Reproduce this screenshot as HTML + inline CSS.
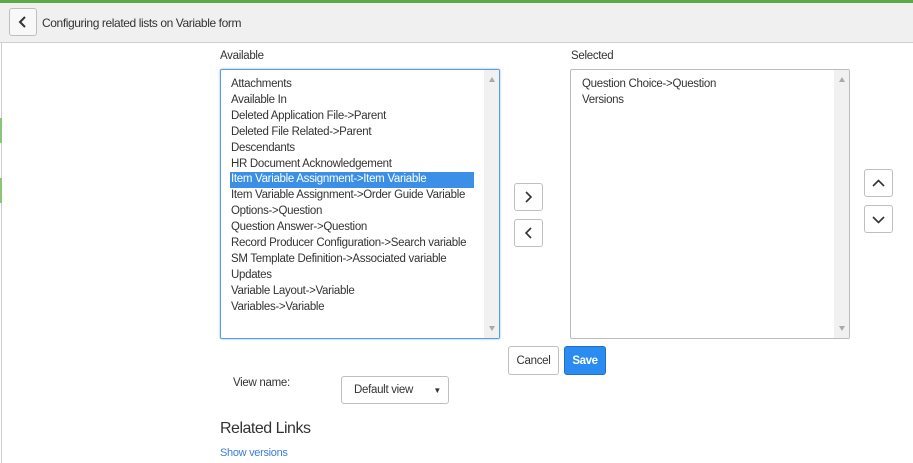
<!DOCTYPE html>
<html><head><style>
body{margin:0;width:913px;height:463px;background:#fff;font-family:"Liberation Sans",sans-serif;color:#333;position:relative;overflow:hidden}
.a{position:absolute}
.topbar{left:0;top:0;width:913px;height:3px;background:#5fa84a}
.hdr{left:0;top:3px;width:913px;height:39px;background:#f0f0f0;border-bottom:1px solid #d0d0d0}
.btn{position:absolute;border:1px solid #bfbfbf;border-radius:3px;background:#fff;box-sizing:border-box}
.lab{font-size:11.5px;color:#333;letter-spacing:-0.3px}
.box{border:1px solid #bbb;border-radius:2px;box-sizing:border-box;background:#fff}
.box .sb{position:absolute;right:0;top:0;width:15px;height:100%;background:#f1f1f1}
.items{position:absolute;left:9px;top:6px;font-size:11.5px;line-height:15.9px;letter-spacing:-0.3px}
.items div{padding-left:1px;white-space:nowrap}
.sel{background:#3b8fe6;color:#fff;width:243px}
.arr{position:absolute;right:4px;width:0;height:0;border-left:3.5px solid transparent;border-right:3.5px solid transparent}
</style></head><body>
<div class="a topbar"></div>
<div class="a hdr"></div>
<div class="btn" style="left:9px;top:8px;width:28px;height:28px;background:#f8f8f8"><svg width="26" height="26" style="position:absolute;left:0;top:0"><path d="M15 8 L10 13 L15 18" stroke="#333" stroke-width="2" fill="none"/></svg></div>
<div class="a" style="left:42px;top:16px;font-size:12px;color:#333;letter-spacing:-0.4px">Configuring related lists on Variable form</div>
<div class="a" style="left:1px;top:43px;width:1px;height:420px;background:#ccc"></div>
<div class="a" style="left:0;top:118px;width:2px;height:25px;background:#8cc47a"></div>
<div class="a" style="left:0;top:178px;width:2px;height:25px;background:#8cc47a"></div>

<div class="a lab" style="left:220px;top:50px">Available</div>
<div class="a box" style="left:220px;top:69px;width:280px;height:270px;border-color:#5b9be0;box-shadow:0 0 2px #8ab8ee">
<div class="sb"></div>
<div class="arr" style="top:7px;border-bottom:5px solid #aaa"></div>
<div class="arr" style="bottom:7px;border-top:5px solid #aaa"></div>
<div class="items" style="top:7px">
<div>Attachments</div><div>Available In</div><div>Deleted Application File-&gt;Parent</div><div>Deleted File Related-&gt;Parent</div><div>Descendants</div><div>HR Document Acknowledgement</div><div class="sel">Item Variable Assignment-&gt;Item Variable</div><div>Item Variable Assignment-&gt;Order Guide Variable</div><div>Options-&gt;Question</div><div>Question Answer-&gt;Question</div><div>Record Producer Configuration-&gt;Search variable</div><div>SM Template Definition-&gt;Associated variable</div><div>Updates</div><div>Variable Layout-&gt;Variable</div><div>Variables-&gt;Variable</div>
</div></div>

<div class="a lab" style="left:571px;top:50px">Selected</div>
<div class="a box" style="left:570px;top:69px;width:280px;height:270px">
<div class="sb"></div>
<div class="arr" style="top:7px;border-bottom:5px solid #aaa"></div>
<div class="arr" style="bottom:7px;border-top:5px solid #aaa"></div>
<div class="items" style="top:7px;left:10px"><div>Question Choice-&gt;Question</div><div>Versions</div></div>
</div>

<div class="btn" style="left:514px;top:183px;width:29px;height:28px"><svg width="27" height="26" style="position:absolute;left:0;top:0"><path d="M11 8 L16 13 L11 18" stroke="#333" stroke-width="1.6" fill="none"/></svg></div>
<div class="btn" style="left:514px;top:219px;width:29px;height:28px"><svg width="27" height="26" style="position:absolute;left:0;top:0"><path d="M16 8 L11 13 L16 18" stroke="#333" stroke-width="1.6" fill="none"/></svg></div>
<div class="btn" style="left:864px;top:169px;width:29px;height:28px"><svg width="27" height="26" style="position:absolute;left:0;top:0"><path d="M8 16 L13.5 10.5 L19 16" stroke="#333" stroke-width="1.6" fill="none"/></svg></div>
<div class="btn" style="left:864px;top:205px;width:29px;height:28px"><svg width="27" height="26" style="position:absolute;left:0;top:0"><path d="M8 11 L13.5 16.5 L19 11" stroke="#333" stroke-width="1.6" fill="none"/></svg></div>

<div class="btn" style="left:508px;top:346px;width:51px;height:29px;font-size:11.5px;text-align:center;line-height:28px;letter-spacing:-0.3px">Cancel</div>
<div class="btn" style="left:564px;top:346px;width:42px;height:29px;font-size:11.5px;text-align:center;line-height:28px;background:#2a8cf0;border-color:#1f6fc4;color:#fff;font-weight:bold;letter-spacing:-0.4px">Save</div>

<div class="a lab" style="left:233px;top:377px">View name:</div>
<div class="btn" style="left:341px;top:376px;width:108px;height:28px;font-size:11.5px;line-height:27px;padding-left:12px;letter-spacing:-0.3px">Default view<span style="position:absolute;right:7px;top:0;font-size:8px">▼</span></div>
<div class="a" style="left:220px;top:420px;font-size:16px;color:#333;letter-spacing:-0.5px">Related Links</div>
<div class="a" style="left:220px;top:447px;font-size:11px;color:#3a7ed8;letter-spacing:-0.3px">Show versions</div>
</body></html>
